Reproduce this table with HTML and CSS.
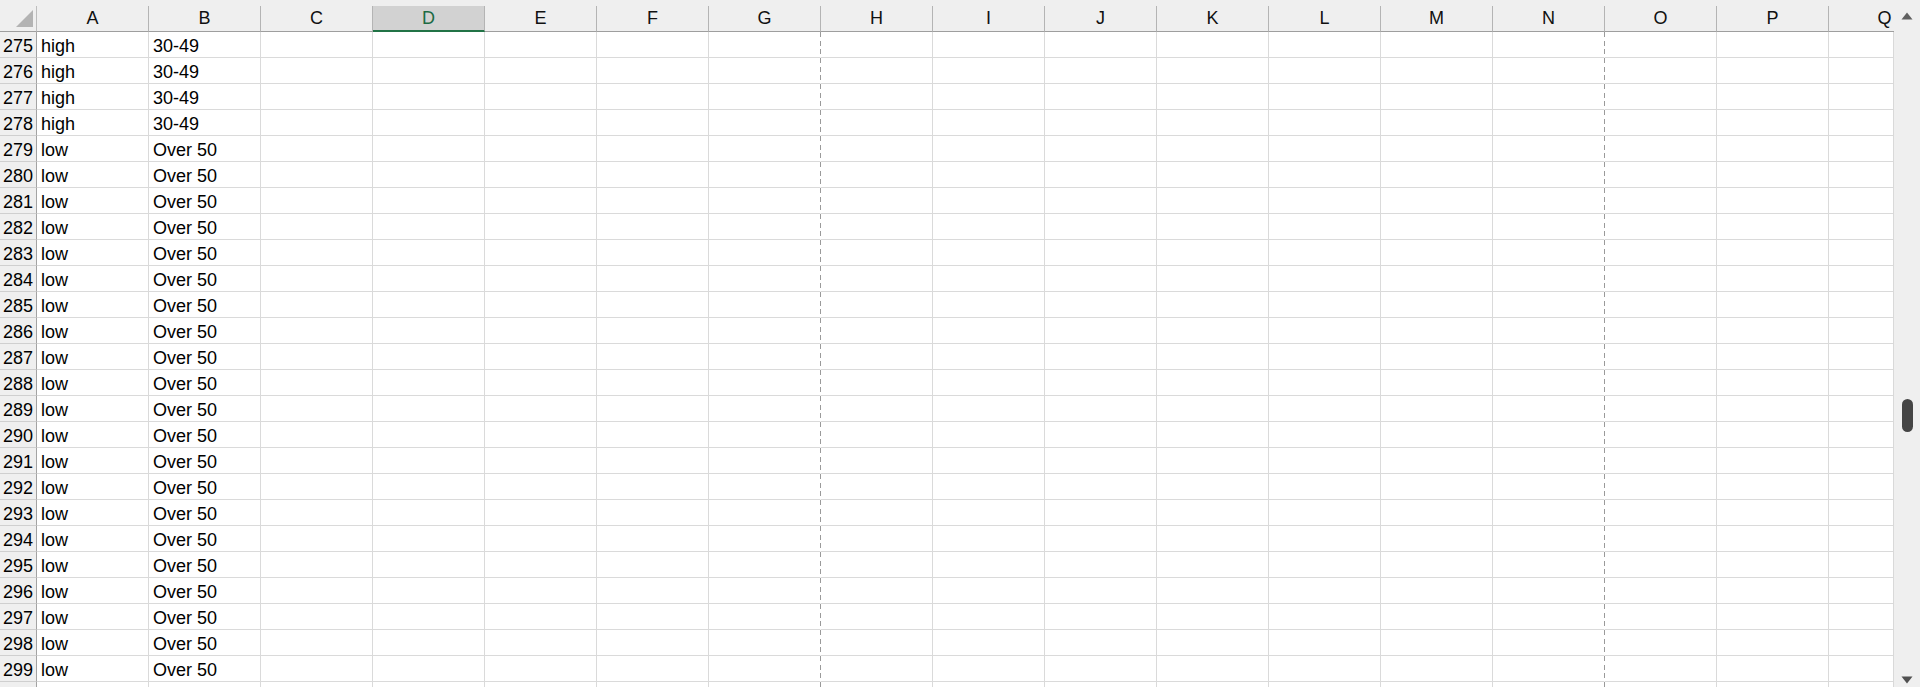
FILE: index.html
```html
<!DOCTYPE html>
<html>
<head>
<meta charset="utf-8">
<link rel="stylesheet" href="styles.css">
</head>
<body>
<div class="app">
  <div class="sheet">
    <div class="colhead">
      <div class="corner"><svg width="36" height="25" viewBox="0 0 36 25"><polygon points="33,4 33,21 16,21" fill="#b3b3b3"/></svg></div>
      <div class="ch">A</div><div class="ch">B</div><div class="ch">C</div><div class="ch sel">D</div><div class="ch">E</div><div class="ch">F</div><div class="ch">G</div><div class="ch">H</div><div class="ch">I</div><div class="ch">J</div><div class="ch">K</div><div class="ch">L</div><div class="ch">M</div><div class="ch">N</div><div class="ch">O</div><div class="ch">P</div><div class="ch">Q</div>
    </div>
    <div class="body">
      <div class="row"><div class="rh">275</div><div class="c">high</div><div class="c">30-49</div><i></i><i></i><i></i><i></i><i></i><i></i><i></i><i></i><i></i><i></i><i></i><i></i><i></i><i></i><i></i></div>
      <div class="row"><div class="rh">276</div><div class="c">high</div><div class="c">30-49</div><i></i><i></i><i></i><i></i><i></i><i></i><i></i><i></i><i></i><i></i><i></i><i></i><i></i><i></i><i></i></div>
      <div class="row"><div class="rh">277</div><div class="c">high</div><div class="c">30-49</div><i></i><i></i><i></i><i></i><i></i><i></i><i></i><i></i><i></i><i></i><i></i><i></i><i></i><i></i><i></i></div>
      <div class="row"><div class="rh">278</div><div class="c">high</div><div class="c">30-49</div><i></i><i></i><i></i><i></i><i></i><i></i><i></i><i></i><i></i><i></i><i></i><i></i><i></i><i></i><i></i></div>
      <div class="row"><div class="rh">279</div><div class="c">low</div><div class="c">Over 50</div><i></i><i></i><i></i><i></i><i></i><i></i><i></i><i></i><i></i><i></i><i></i><i></i><i></i><i></i><i></i></div>
      <div class="row"><div class="rh">280</div><div class="c">low</div><div class="c">Over 50</div><i></i><i></i><i></i><i></i><i></i><i></i><i></i><i></i><i></i><i></i><i></i><i></i><i></i><i></i><i></i></div>
      <div class="row"><div class="rh">281</div><div class="c">low</div><div class="c">Over 50</div><i></i><i></i><i></i><i></i><i></i><i></i><i></i><i></i><i></i><i></i><i></i><i></i><i></i><i></i><i></i></div>
      <div class="row"><div class="rh">282</div><div class="c">low</div><div class="c">Over 50</div><i></i><i></i><i></i><i></i><i></i><i></i><i></i><i></i><i></i><i></i><i></i><i></i><i></i><i></i><i></i></div>
      <div class="row"><div class="rh">283</div><div class="c">low</div><div class="c">Over 50</div><i></i><i></i><i></i><i></i><i></i><i></i><i></i><i></i><i></i><i></i><i></i><i></i><i></i><i></i><i></i></div>
      <div class="row"><div class="rh">284</div><div class="c">low</div><div class="c">Over 50</div><i></i><i></i><i></i><i></i><i></i><i></i><i></i><i></i><i></i><i></i><i></i><i></i><i></i><i></i><i></i></div>
      <div class="row"><div class="rh">285</div><div class="c">low</div><div class="c">Over 50</div><i></i><i></i><i></i><i></i><i></i><i></i><i></i><i></i><i></i><i></i><i></i><i></i><i></i><i></i><i></i></div>
      <div class="row"><div class="rh">286</div><div class="c">low</div><div class="c">Over 50</div><i></i><i></i><i></i><i></i><i></i><i></i><i></i><i></i><i></i><i></i><i></i><i></i><i></i><i></i><i></i></div>
      <div class="row"><div class="rh">287</div><div class="c">low</div><div class="c">Over 50</div><i></i><i></i><i></i><i></i><i></i><i></i><i></i><i></i><i></i><i></i><i></i><i></i><i></i><i></i><i></i></div>
      <div class="row"><div class="rh">288</div><div class="c">low</div><div class="c">Over 50</div><i></i><i></i><i></i><i></i><i></i><i></i><i></i><i></i><i></i><i></i><i></i><i></i><i></i><i></i><i></i></div>
      <div class="row"><div class="rh">289</div><div class="c">low</div><div class="c">Over 50</div><i></i><i></i><i></i><i></i><i></i><i></i><i></i><i></i><i></i><i></i><i></i><i></i><i></i><i></i><i></i></div>
      <div class="row"><div class="rh">290</div><div class="c">low</div><div class="c">Over 50</div><i></i><i></i><i></i><i></i><i></i><i></i><i></i><i></i><i></i><i></i><i></i><i></i><i></i><i></i><i></i></div>
      <div class="row"><div class="rh">291</div><div class="c">low</div><div class="c">Over 50</div><i></i><i></i><i></i><i></i><i></i><i></i><i></i><i></i><i></i><i></i><i></i><i></i><i></i><i></i><i></i></div>
      <div class="row"><div class="rh">292</div><div class="c">low</div><div class="c">Over 50</div><i></i><i></i><i></i><i></i><i></i><i></i><i></i><i></i><i></i><i></i><i></i><i></i><i></i><i></i><i></i></div>
      <div class="row"><div class="rh">293</div><div class="c">low</div><div class="c">Over 50</div><i></i><i></i><i></i><i></i><i></i><i></i><i></i><i></i><i></i><i></i><i></i><i></i><i></i><i></i><i></i></div>
      <div class="row"><div class="rh">294</div><div class="c">low</div><div class="c">Over 50</div><i></i><i></i><i></i><i></i><i></i><i></i><i></i><i></i><i></i><i></i><i></i><i></i><i></i><i></i><i></i></div>
      <div class="row"><div class="rh">295</div><div class="c">low</div><div class="c">Over 50</div><i></i><i></i><i></i><i></i><i></i><i></i><i></i><i></i><i></i><i></i><i></i><i></i><i></i><i></i><i></i></div>
      <div class="row"><div class="rh">296</div><div class="c">low</div><div class="c">Over 50</div><i></i><i></i><i></i><i></i><i></i><i></i><i></i><i></i><i></i><i></i><i></i><i></i><i></i><i></i><i></i></div>
      <div class="row"><div class="rh">297</div><div class="c">low</div><div class="c">Over 50</div><i></i><i></i><i></i><i></i><i></i><i></i><i></i><i></i><i></i><i></i><i></i><i></i><i></i><i></i><i></i></div>
      <div class="row"><div class="rh">298</div><div class="c">low</div><div class="c">Over 50</div><i></i><i></i><i></i><i></i><i></i><i></i><i></i><i></i><i></i><i></i><i></i><i></i><i></i><i></i><i></i></div>
      <div class="row"><div class="rh">299</div><div class="c">low</div><div class="c">Over 50</div><i></i><i></i><i></i><i></i><i></i><i></i><i></i><i></i><i></i><i></i><i></i><i></i><i></i><i></i><i></i></div>
      <div class="row"><div class="rh"></div><div class="c"></div><div class="c"></div><i></i><i></i><i></i><i></i><i></i><i></i><i></i><i></i><i></i><i></i><i></i><i></i><i></i><i></i><i></i></div>
    </div>
  </div>
  <div class="vscroll">
    <svg class="arrow up" width="12" height="8" viewBox="0 0 12 8"><polygon points="6,0.5 11.5,7.5 0.5,7.5" fill="#606060"/></svg>
    <div class="thumb"></div>
    <svg class="arrow down" width="12" height="8" viewBox="0 0 12 8"><polygon points="0.5,0.5 11.5,0.5 6,7.5" fill="#505050"/></svg>
  </div>
</div>
</body>
</html>
```

FILE: styles.css
```css
html, body {
  margin: 0;
  padding: 0;
  height: 687px;
  overflow: hidden;
  background: #ffffff;
}

.app {
  display: flex;
  width: 1920px;
  height: 687px;
  font-family: "Liberation Sans", Arial, sans-serif;
  font-size: 18px;
  color: #000;
}

.sheet {
  width: 1894px;
  flex: none;
  overflow: hidden;
}

.colhead {
  display: flex;
  height: 32px;
  background: #efefef;
  overflow: hidden;
}

.corner {
  flex: none;
  width: 37px;
  height: 26px;
  margin-top: 6px;
  box-sizing: border-box;
  border-bottom: 1px solid #9e9e9e;
  border-right: 1px solid #bdbdbd;
}

.corner svg {
  display: block;
}

.ch {
  flex: none;
  width: 112px;
  height: 26px;
  margin-top: 6px;
  box-sizing: border-box;
  border-right: 1px solid #b4b4b4;
  border-bottom: 1px solid #9e9e9e;
  display: flex;
  align-items: center;
  justify-content: center;
  font-size: 18px;
  color: #111;
}

.ch.sel {
  background: #d2d2d2;
  border-bottom: 2px solid #217346;
  color: #1d6b44;
}

.body {
  width: 1893px;
  border-right: 1px solid #d9d9d9;
  overflow: hidden;
}

.row {
  display: flex;
  height: 26px;
}

.row > * {
  flex: none;
  width: 112px;
  height: 26px;
  box-sizing: border-box;
  border-right: 1px solid #dadada;
  border-bottom: 1px solid #dadada;
  padding-top: 4px;
  line-height: 21px;
  white-space: nowrap;
  overflow: hidden;
}

.row > .rh {
  width: 37px;
  background: #efefef;
  border-right: 1px solid #a3a3a3;
  border-bottom: 1px solid #cfcfcf;
  text-align: right;
  padding-right: 3px;
}

.row > .c {
  padding-left: 4px;
}

/* page break lines after column G and column N */
.row > :nth-child(8),
.row > :nth-child(15) {
  border-right-color: transparent;
  background-image: repeating-linear-gradient(to bottom, #9a9a9a 0, #9a9a9a 5px, transparent 5px, transparent 8.667px);
  background-origin: border-box;
  background-position: right top;
  background-size: 1px 100%;
  background-repeat: no-repeat;
}

.vscroll {
  flex: 1;
  background: #efefef;
  display: flex;
  flex-direction: column;
  align-items: flex-start;
  padding-left: 7px;
}

.arrow {
  display: block;
}

.arrow.up {
  margin-top: 12px;
}

.thumb {
  width: 11px;
  height: 33px;
  border-radius: 6px;
  background: #454545;
  margin-top: 379px;
  margin-left: 1px;
}

.arrow.down {
  margin-top: auto;
  margin-bottom: 3px;
}
```
